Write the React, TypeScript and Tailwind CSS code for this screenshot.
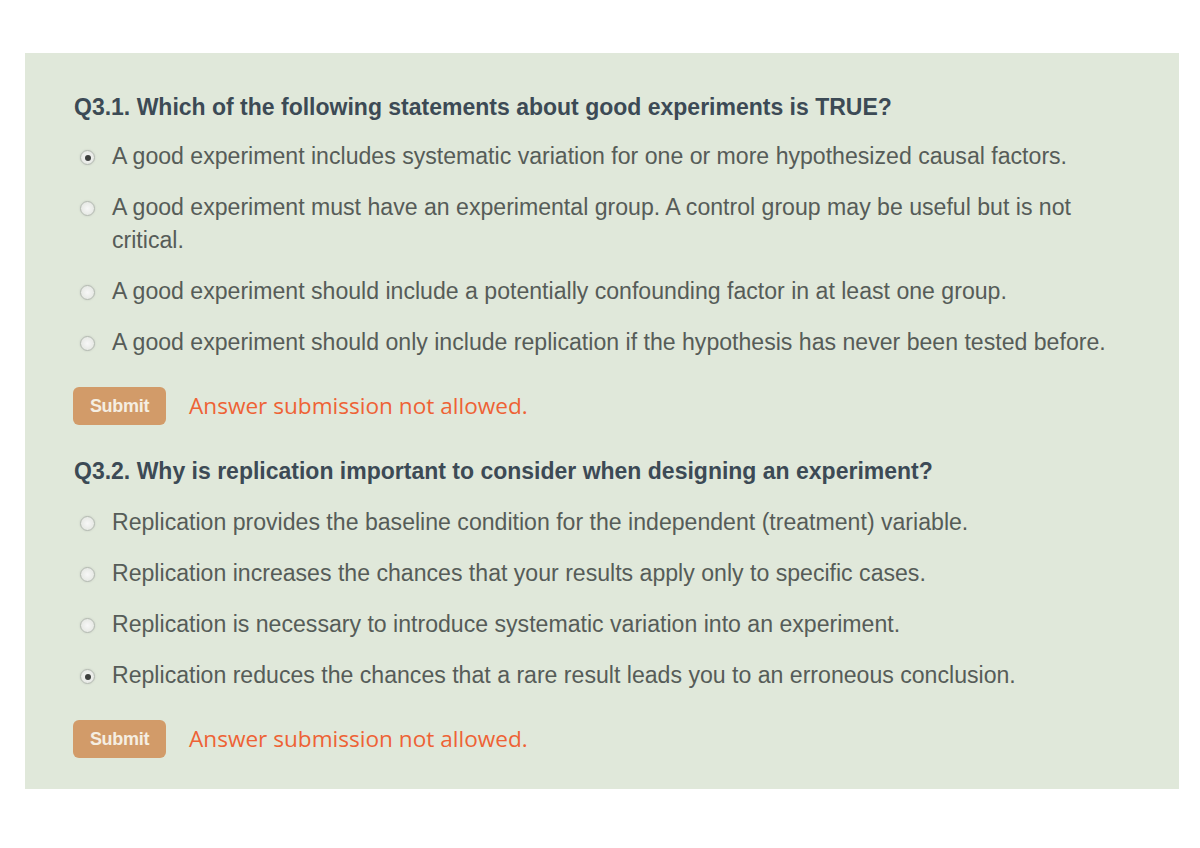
import React from "react";

type Opt = { text: React.ReactNode; checked?: boolean };

function Radio({ checked }: { checked?: boolean }) {
  return (
    <span className="mt-[10px] mr-[17px] flex h-[15px] w-[15px] shrink-0 items-center justify-center rounded-full border border-[#b3b9b1] bg-[radial-gradient(circle,#f7f7f7_0%,#e8eae6_65%,#d2d6d0_100%)] shadow-[0_0_2px_#c2c8bf]">
      {checked && <span className="h-[6px] w-[6px] rounded-full bg-[#3d3f3e]" />}
    </span>
  );
}

function Option({ o }: { o: Opt }) {
  return (
    <div className="flex items-start pl-[55px] pr-[69px]">
      <Radio checked={o.checked} />
      <div className="text-[23.1px] leading-[33px] text-[#565c58]">{o.text}</div>
    </div>
  );
}

function Submit() {
  return (
    <div className="mt-[28px] flex items-center pl-[48px]">
      <button className="h-[38px] w-[93px] rounded-[6px] bg-[#d29b69] text-[18px] font-bold tracking-[-0.3px] text-[#f5eee2] [font-family:'Liberation_Sans',Arial,sans-serif]">
        Submit
      </button>
      <span className="ml-[23px] text-[22.6px] text-[#ee6235] [font-family:'Open_Sans',sans-serif]">
        Answer submission not allowed.
      </span>
    </div>
  );
}

export default function App() {
  const q1: Opt[] = [
    { text: "A good experiment includes systematic variation for one or more hypothesized causal factors.", checked: true },
    { text: "A good experiment must have an experimental group. A control group may be useful but is not critical." },
    { text: "A good experiment should include a potentially confounding factor in at least one group." },
    { text: "A good experiment should only include replication if the hypothesis has never been tested before." },
  ];
  const q2: Opt[] = [
    { text: "Replication provides the baseline condition for the independent (treatment) variable." },
    { text: "Replication increases the chances that your results apply only to specific cases." },
    { text: "Replication is necessary to introduce systematic variation into an experiment." },
    { text: "Replication reduces the chances that a rare result leads you to an erroneous conclusion.", checked: true },
  ];
  return (
    <div className="min-h-[848px] w-[1200px] bg-white pt-[53px] [font-family:'Liberation_Sans',Arial,sans-serif]">
      <div className="ml-[25px] h-[736px] w-[1154px] bg-[#e0e8da] pt-[38px]">
        <div className="pl-[49px] text-[23px] font-bold leading-[33px] text-[#3c4a55]">
          Q3.1. Which of the following statements about good experiments is TRUE?
        </div>
        <div className="mt-[16px] flex flex-col gap-[18px]">
          {q1.map((o, i) => (
            <Option key={i} o={o} />
          ))}
        </div>
        <Submit />
        <div className="mt-[30px] pl-[49px] text-[23px] font-bold leading-[33px] text-[#3c4a55]">
          Q3.2. Why is replication important to consider when designing an experiment?
        </div>
        <div className="mt-[18px] flex flex-col gap-[18px]">
          {q2.map((o, i) => (
            <Option key={i} o={o} />
          ))}
        </div>
        <Submit />
      </div>
    </div>
  );
}
